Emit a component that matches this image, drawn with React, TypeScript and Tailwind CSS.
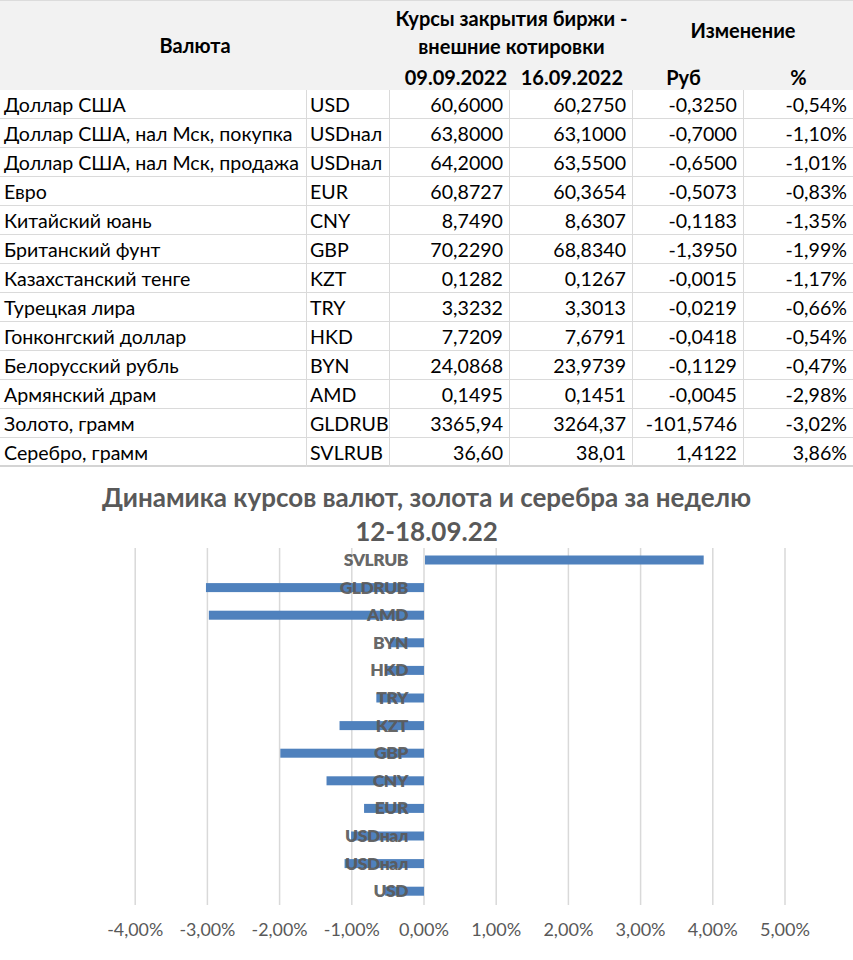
import React from 'react';

type Row = [string, string, string, string, string, string];

const rows: Row[] = [
  ['Доллар США', 'USD', '60,6000', '60,2750', '-0,3250', '-0,54%'],
  ['Доллар США, нал Мск, покупка', 'USDнал', '63,8000', '63,1000', '-0,7000', '-1,10%'],
  ['Доллар США, нал Мск, продажа', 'USDнал', '64,2000', '63,5500', '-0,6500', '-1,01%'],
  ['Евро', 'EUR', '60,8727', '60,3654', '-0,5073', '-0,83%'],
  ['Китайский юань', 'CNY', '8,7490', '8,6307', '-0,1183', '-1,35%'],
  ['Британский фунт', 'GBP', '70,2290', '68,8340', '-1,3950', '-1,99%'],
  ['Казахстанский тенге', 'KZT', '0,1282', '0,1267', '-0,0015', '-1,17%'],
  ['Турецкая лира', 'TRY', '3,3232', '3,3013', '-0,0219', '-0,66%'],
  ['Гонконгский доллар', 'HKD', '7,7209', '7,6791', '-0,0418', '-0,54%'],
  ['Белорусский рубль', 'BYN', '24,0868', '23,9739', '-0,1129', '-0,47%'],
  ['Армянский драм', 'AMD', '0,1495', '0,1451', '-0,0045', '-2,98%'],
  ['Золото, грамм', 'GLDRUB', '3365,94', '3264,37', '-101,5746', '-3,02%'],
  ['Серебро, грамм', 'SVLRUB', '36,60', '38,01', '1,4122', '3,86%'],
];

// chart order, top to bottom
const bars: { code: string; pct: number }[] = [
  { code: 'SVLRUB', pct: 3.86 },
  { code: 'GLDRUB', pct: -3.02 },
  { code: 'AMD', pct: -2.98 },
  { code: 'BYN', pct: -0.47 },
  { code: 'HKD', pct: -0.54 },
  { code: 'TRY', pct: -0.66 },
  { code: 'KZT', pct: -1.17 },
  { code: 'GBP', pct: -1.99 },
  { code: 'CNY', pct: -1.35 },
  { code: 'EUR', pct: -0.83 },
  { code: 'USDнал', pct: -1.01 },
  { code: 'USDнал', pct: -1.1 },
  { code: 'USD', pct: -0.54 },
];

const ZERO = 424;
const UNIT = 72.2;
const font = { fontFamily: 'Lato, "Open Sans", "DejaVu Sans", sans-serif' };

const Chart: React.FC = () => {
  const ticks = [-4, -3, -2, -1, 0, 1, 2, 3, 4, 5];
  return (
    <svg width={853} height={412} className="block" style={font}>
      {ticks.map(t => (
        <line key={t} x1={ZERO + t * UNIT} x2={ZERO + t * UNIT} y1={0} y2={357} stroke="#d9d9d9" strokeWidth={1.5} />
      ))}
      {bars.map((b, i) => {
        const cy = 12 + i * 27.6;
        const x = b.pct < 0 ? ZERO + b.pct * UNIT : ZERO + 1;
        return (
          <g key={i}>
            <rect x={x} y={cy - 4.5} width={Math.abs(b.pct) * UNIT} height={9} fill="#4f81bd" />
            <text x={408} y={cy + 6} textAnchor="end" fontSize={17.5} fontWeight={800} fill="#595959" fillOpacity={0.92} letterSpacing={-0.5}>
              {b.code}
            </text>
          </g>
        );
      })}
      {ticks.map(t => (
        <text
          key={t}
          x={ZERO + t * UNIT - 28}
          y={388}
          fontSize={17}
          fill="#595959"
          textLength={t < 0 ? 56 : 50}
          lengthAdjust="spacingAndGlyphs"
          dx={t < 0 ? 0 : 3}
        >
          {t.toFixed(2).replace('.', ',') + '%'}
        </text>
      ))}
    </svg>
  );
};

export default function App() {
  const cols = 'grid grid-cols-[307px_83px_120px_123px_111px_109px]';
  return (
    <div className="w-[853px] h-[960px] bg-white text-black overflow-hidden" style={font}>
      <div className="bg-[#f2f2f2] border-t border-[#dcdcdc] h-[90px] text-[20px] font-bold">
        <div className={`${cols} h-[61px]`}>
          <div className="col-span-2 row-span-2 flex items-center justify-center pt-[27px]">Валюта</div>
          <div className="col-span-2 flex flex-col items-center justify-center leading-[28px] pt-[2px]">
            <span>Курсы закрытия биржи -</span>
            <span>внешние котировки</span>
          </div>
          <div className="col-span-2 flex items-center justify-center pb-[2px]">Изменение</div>
        </div>
        <div className={`${cols} h-[28px] items-center`}>
          <div />
          <div />
          <div className="text-right pr-[3px]">09.09.2022</div>
          <div className="text-right pr-[10px]">16.09.2022</div>
          <div className="text-center pr-[10px]">Руб</div>
          <div className="text-center">%</div>
        </div>
      </div>
      <div className="text-[19.6px]">
        {rows.map((r, i) => (
          <div
            key={i}
            className={`${cols} h-[29px] ${i === rows.length - 1 ? 'border-b-2 border-[#d4d4d4]' : 'border-b border-[#dadada]'}`}
          >
            <div className="pl-[4px] border-r border-[#dadada] flex items-center whitespace-nowrap">{r[0]}</div>
            <div className="pl-[3px] border-r border-[#dadada] flex items-center">{r[1]}</div>
            {r.slice(2).map((v, j) => (
              <div key={j} className={`pr-[6px] flex items-center justify-end ${j < 3 ? 'border-r border-[#dadada]' : ''}`}>
                {v}
              </div>
            ))}
          </div>
        ))}
      </div>
      <div className="mt-[13px] text-center text-[26px] leading-[34px] font-bold text-[#595959]">
        <div>Динамика курсов валют, золота и серебра за неделю</div>
        <div>12-18.09.22</div>
      </div>
      <Chart />
    </div>
  );
}
